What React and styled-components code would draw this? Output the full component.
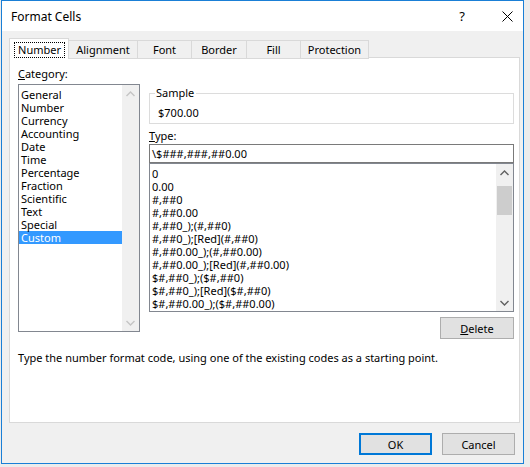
import React from "react";
import styled, { createGlobalStyle } from "styled-components";

const GlobalStyle = createGlobalStyle`
  html, body {
    margin: 0;
    padding: 0;
    background: #ececec;
  }
  body {
    font-family: "Noto Sans", "Open Sans", sans-serif;
    font-size: 11px;
    color: #000;
  }
`;

const categories = [
  "General",
  "Number",
  "Currency",
  "Accounting",
  "Date",
  "Time",
  "Percentage",
  "Fraction",
  "Scientific",
  "Text",
  "Special",
  "Custom",
];

const formats = [
  "0",
  "0.00",
  "#,##0",
  "#,##0.00",
  "#,##0_);(#,##0)",
  "#,##0_);[Red](#,##0)",
  "#,##0.00_);(#,##0.00)",
  "#,##0.00_);[Red](#,##0.00)",
  "$#,##0_);($#,##0)",
  "$#,##0_);[Red]($#,##0)",
  "$#,##0.00_);($#,##0.00)",
];

const tabs = [
  { label: "Number", w: 60 },
  { label: "Alignment", w: 69 },
  { label: "Font", w: 54 },
  { label: "Border", w: 55 },
  { label: "Fill", w: 54 },
  { label: "Protection", w: 68 },
];

const Dialog = styled.div`
  width: 521px;
  height: 462px;
  margin-left: 1px;
  border: 1px solid #1a7fd6;
  display: flex;
  flex-direction: column;
  background: #f0f0f0;
`;

const TitleBar = styled.div`
  height: 30px;
  background: #fff;
  display: flex;
  align-items: center;
  padding-left: 9px;
  font-size: 12px;
`;

const Title = styled.div`
  flex: 1;
  line-height: 14px;
  margin-top: 1px;
`;

const TitleButton = styled.div`
  width: ${(p) => p.$w}px;
  height: 30px;
  display: flex;
  align-items: center;
  justify-content: center;
  font-size: 13px;
`;

const Body = styled.div`
  flex: 1;
  display: flex;
  flex-direction: column;
  padding: 8px 2px 0 7px;
`;

const TabStrip = styled.div`
  display: flex;
  height: 19px;
  padding-left: 2px;
  position: relative;
  z-index: 1;
`;

const Tab = styled.div`
  width: ${(p) => p.$w}px;
  height: ${(p) => (p.$active ? "21px" : "19px")};
  margin-top: ${(p) => (p.$active ? "-1px" : "1px")};
  margin-left: ${(p) => (p.$active ? "-2px" : "0")};
  border: 1px solid #d9d9d9;
  border-left-width: ${(p) => (p.$active ? "1px" : "0")};
  border-bottom: ${(p) => (p.$active ? "none" : "1px solid #d9d9d9")};
  background: ${(p) => (p.$active ? "#fff" : "#f0f0f0")};
  display: flex;
  align-items: center;
  justify-content: center;
  box-sizing: border-box;
  padding-top: 1px;
  padding-left: ${(p) => (p.$active ? "1px" : "0")};
`;

const TabLabel = styled.span`
  padding: 0 3px;
  line-height: 14px;
  outline: ${(p) => (p.$focus ? "1px dotted #000" : "none")};
`;

const Panel = styled.div`
  height: 366px;
  width: 511px;
  box-sizing: border-box;
  border: 1px solid #d9d9d9;
  margin-top: -1px;
  background: #fff;
  padding: 9px 7px 0 8px;
  display: flex;
  flex-direction: column;
`;

const Columns = styled.div`
  display: grid;
  grid-template-columns: 122px 365px;
  column-gap: 9px;
`;

const Column = styled.div`
  display: flex;
  flex-direction: column;
`;

const Label = styled.div`
  line-height: 14px;
  height: 14px;
  margin-bottom: ${(p) => p.$gap || 2}px;
  margin-top: ${(p) => p.$top || 0}px;
`;

const ListBox = styled.div`
  display: flex;
  height: ${(p) => p.$h}px;
  border: 1px solid #828790;
  box-sizing: border-box;
  background: #fff;
`;

const Items = styled.div`
  flex: 1;
  padding-top: ${(p) => p.$pad || 2}px;
  overflow: hidden;
`;

const Item = styled.div`
  height: 13px;
  line-height: 13px;
  padding-left: 2px;
  white-space: nowrap;
  background: ${(p) => (p.$selected ? "#3399ff" : "transparent")};
  color: ${(p) => (p.$selected ? "#fff" : "#000")};
`;

const ScrollBar = styled.div`
  width: 17px;
  background: #f0f0f0;
  display: flex;
  flex-direction: column;
`;

const ArrowBox = styled.div`
  height: 17px;
  display: flex;
  align-items: center;
  justify-content: center;
`;

const Track = styled.div`
  flex: 1;
  display: flex;
  flex-direction: column;
  padding-top: 5px;
`;

const Thumb = styled.div`
  height: 29px;
  background: #cdcdcd;
  margin: 0 1px;
`;

const Fieldset = styled.fieldset`
  margin: 20px 0 0 0;
  padding: 7px 7px 3px 7px;
  border: 1px solid #dcdcdc;
  box-sizing: border-box;
  min-width: 0;
`;

const Legend = styled.legend`
  padding: 0 2px 0 1px;
  margin-left: -2px;
  line-height: 12px;
`;

const SampleValue = styled.div`
  line-height: 14px;
  margin-left: 1px;
`;

const TextInput = styled.div`
  height: 19px;
  box-sizing: border-box;
  border: 1px solid #7a7a7a;
  padding-left: 2px;
  line-height: 17px;
  background: #fff;
`;

const ButtonRow = styled.div`
  display: flex;
  justify-content: flex-end;
  gap: ${(p) => p.$gap || 10}px;
  margin-top: ${(p) => p.$top || 0}px;
`;

const Button = styled.button`
  width: ${(p) => p.$w || 74}px;
  height: 22px;
  box-sizing: border-box;
  font-family: inherit;
  font-size: 11px;
  color: #000;
  background: #e1e1e1;
  border: ${(p) => (p.$default ? "2px solid #0078d7" : "1px solid #adadad")};
  padding: 0;
  margin: 0;
`;

const Hint = styled.div`
  margin-top: 12px;
  line-height: 14px;
  white-space: nowrap;
`;

const Footer = styled.div`
  display: flex;
  justify-content: flex-end;
  padding: 10px 6px 0 0;
`;

const Chevron = ({ up, color }) => (
  <svg width="9" height="6" viewBox="0 0 9 6">
    <path
      d={up ? "M0.5 5 L4.5 1 L8.5 5" : "M0.5 1 L4.5 5 L8.5 1"}
      fill="none"
      stroke={color}
      strokeWidth="1.4"
    />
  </svg>
);

const CloseIcon = () => (
  <svg width="11" height="11" viewBox="0 0 11 11">
    <path d="M0.5 0.5 L10.5 10.5 M10.5 0.5 L0.5 10.5" stroke="#000" strokeWidth="1" />
  </svg>
);

const App = () => {
  return (
    <>
      <GlobalStyle />
      <Dialog>
        <TitleBar>
          <Title>Format Cells</Title>
          <TitleButton $w={58}>?</TitleButton>
          <TitleButton $w={32}>
            <CloseIcon />
          </TitleButton>
        </TitleBar>
        <Body>
          <TabStrip>
            {tabs.map((t, i) => (
              <Tab key={t.label} $w={t.w} $active={i === 0}>
                <TabLabel $focus={i === 0}>{t.label}</TabLabel>
              </Tab>
            ))}
          </TabStrip>
          <Panel>
            <Columns>
              <Column>
                <Label $gap={3}>
                  <u>C</u>ategory:
                </Label>
                <ListBox $h={248}>
                  <Items $pad={3}>
                    {categories.map((c) => (
                      <Item key={c} $selected={c === "Custom"}>
                        {c}
                      </Item>
                    ))}
                  </Items>
                  <ScrollBar>
                    <ArrowBox>
                      <Chevron up color="#c5c5c5" />
                    </ArrowBox>
                    <Track />
                    <ArrowBox>
                      <Chevron color="#c5c5c5" />
                    </ArrowBox>
                  </ScrollBar>
                </ListBox>
              </Column>
              <Column>
                <Fieldset>
                  <Legend>Sample</Legend>
                  <SampleValue>$700.00</SampleValue>
                </Fieldset>
                <Label $top={5} $gap={1}>
                  <u>T</u>ype:
                </Label>
                <TextInput>\$###,###,##0.00</TextInput>
                <ListBox $h={149}>
                  <Items $pad={3}>
                    {formats.map((f) => (
                      <Item key={f}>{f}</Item>
                    ))}
                  </Items>
                  <ScrollBar>
                    <ArrowBox>
                      <Chevron up color="#606060" />
                    </ArrowBox>
                    <Track>
                      <Thumb />
                    </Track>
                    <ArrowBox>
                      <Chevron color="#606060" />
                    </ArrowBox>
                  </ScrollBar>
                </ListBox>
                <ButtonRow $top={5}>
                  <Button>
                    <u>D</u>elete
                  </Button>
                </ButtonRow>
              </Column>
            </Columns>
            <Hint>
              Type the number format code, using one of the existing codes as a
              starting point.
            </Hint>
          </Panel>
          <Footer>
            <ButtonRow $gap={10}>
              <Button $default $w={73}>
                OK
              </Button>
              <Button $w={73}>Cancel</Button>
            </ButtonRow>
          </Footer>
        </Body>
      </Dialog>
    </>
  );
};

export default App;
